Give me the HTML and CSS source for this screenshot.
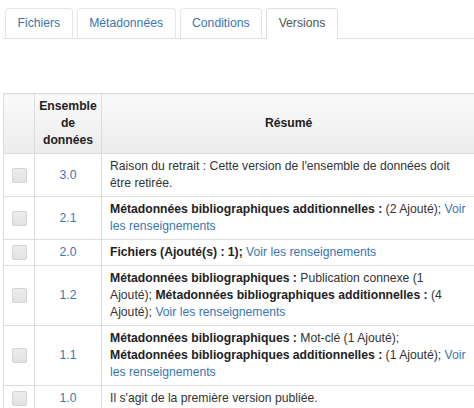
FILE: index.html
```html
<!DOCTYPE html>
<html lang="fr">
<head>
<meta charset="utf-8">
<title>Versions</title>
<link rel="stylesheet" href="styles.css">
</head>
<body>
<div class="page">
  <ul class="tabs">
    <li class="tab"><a href="#">Fichiers</a></li>
    <li class="tab"><a href="#">Métadonnées</a></li>
    <li class="tab"><a href="#">Conditions</a></li>
    <li class="tab active"><a href="#">Versions</a></li>
  </ul>
  <table class="versions">
    <colgroup>
      <col class="c-check">
      <col class="c-ver">
      <col class="c-sum">
    </colgroup>
    <thead>
      <tr>
        <th></th>
        <th>Ensemble<br>de<br>données</th>
        <th class="sum-head">Résumé</th>
      </tr>
    </thead>
    <tbody>
      <tr>
        <td class="chk"><span class="box"></span></td>
        <td class="ver"><a href="#">3.0</a></td>
        <td class="sum">Raison du retrait : Cette version de l'ensemble de données doit être retirée.</td>
      </tr>
      <tr>
        <td class="chk"><span class="box"></span></td>
        <td class="ver"><a href="#">2.1</a></td>
        <td class="sum"><b>Métadonnées bibliographiques additionnelles :</b> (2 Ajouté); <a href="#">Voir les renseignements</a></td>
      </tr>
      <tr>
        <td class="chk"><span class="box"></span></td>
        <td class="ver"><a href="#">2.0</a></td>
        <td class="sum"><b>Fichiers (Ajouté(s) : 1);</b> <a href="#">Voir les renseignements</a></td>
      </tr>
      <tr>
        <td class="chk"><span class="box"></span></td>
        <td class="ver"><a href="#">1.2</a></td>
        <td class="sum"><b>Métadonnées bibliographiques :</b> Publication connexe (1 Ajouté); <b>Métadonnées bibliographiques additionnelles :</b> (4 Ajouté); <a href="#">Voir les renseignements</a></td>
      </tr>
      <tr>
        <td class="chk"><span class="box"></span></td>
        <td class="ver"><a href="#">1.1</a></td>
        <td class="sum"><b>Métadonnées bibliographiques :</b> Mot-clé (1 Ajouté); <b>Métadonnées bibliographiques additionnelles :</b> (1 Ajouté); <a href="#">Voir les renseignements</a></td>
      </tr>
      <tr>
        <td class="chk"><span class="box"></span></td>
        <td class="ver"><a href="#">1.0</a></td>
        <td class="sum">Il s'agit de la première version publiée.</td>
      </tr>
    </tbody>
  </table>
</div>
</body>
</html>
```
FILE: styles.css
```css
html, body {
  margin: 0;
  padding: 0;
  overflow: hidden;
  background: #fff;
}
body {
  font-family: "Liberation Sans", Arial, Helvetica, sans-serif;
  font-size: 12.2px;
  line-height: 17px;
  color: #333;
}
.page {
  width: 474px;
  overflow: hidden;
  padding: 8px 0 0 3px;
  box-sizing: border-box;
}
a {
  color: #3a76b0;
  text-decoration: none;
}
.tabs {
  list-style: none;
  margin: 0;
  padding: 0 0 0 2px;
  display: flex;
  gap: 4px;
  border-bottom: 1px solid #ddd;
  width: 600px;
}
.tab {
  margin-bottom: -1px;
}
.tab a {
  display: block;
  padding: 6px 11.5px;
  border: 1px solid #e6e6e6;
  border-bottom-color: #ddd;
  border-radius: 4px 4px 0 0;
  line-height: 17px;
}
.tab.active a {
  color: #555;
  border-color: #ddd;
  border-bottom-color: #fff;
  background: #fff;
}
.versions {
  margin-top: 54px;
  border-collapse: collapse;
  table-layout: fixed;
  width: 480px;
}
.c-check { width: 31px; }
.c-ver { width: 67px; }
.versions th,
.versions td {
  border: 1px solid #ddd;
  padding: 4px 8px;
  vertical-align: middle;
}
.versions thead th {
  background: linear-gradient(#fafafa, #ececec);
  font-weight: bold;
  text-align: center;
  padding: 4px 4px;
  color: #222;
}
.versions thead th.sum-head {
  padding-left: 8px;
  padding-right: 14.7px;
}
.versions td.sum {
  padding-right: 14.7px;
}
.versions td.ver {
  text-align: center;
}
.versions td.chk {
  padding: 4px 0;
  text-align: center;
}
.box {
  display: inline-block;
  width: 13px;
  height: 13px;
  border: 1px solid #d4d4d4;
  border-radius: 2px;
  background: linear-gradient(#ececec, #e2e2e2);
  vertical-align: middle;
}
b {
  font-weight: bold;
  color: #222;
}
```
